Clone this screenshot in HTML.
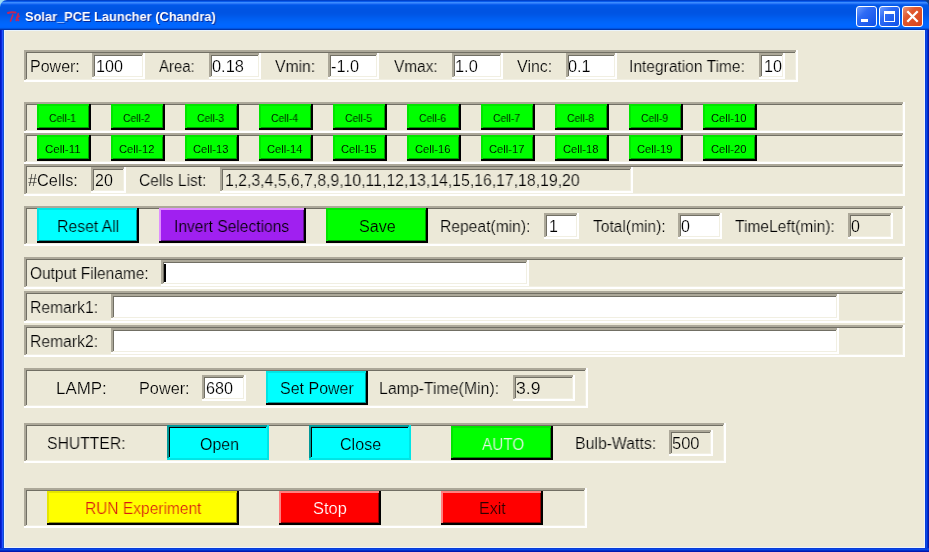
<!DOCTYPE html>
<html><head><meta charset="utf-8"><title>Solar_PCE Launcher (Chandra)</title><style>
html,body{margin:0;padding:0;width:929px;height:552px;overflow:hidden;background:#ECE9D8}
div{position:absolute;box-sizing:border-box}
.t{font-family:'Liberation Sans', sans-serif;line-height:20px;white-space:pre;transform-origin:0 0;will-change:transform}
</style></head><body>
<div style="left:0;top:0;width:8px;height:8px;background:#9EDCF4"></div>
<div style="left:921px;top:0;width:8px;height:8px;background:#10408C"></div>
<div style="left:0;top:0;width:929px;height:30px;border-radius:7px 7px 0 0;background:linear-gradient(180deg,#0041C9 0px,#0041C9 1px,#0A5BEC 1px,#0A5BEC 2px,#3A8CFF 2px,#3A8CFF 3px,#2A78F8 3px,#2A78F8 4px,#0E60F0 4px,#0E60F0 5px,#0058E8 5px,#0058E8 6px,#0057E6 6px,#0057E6 7px,#0056E5 7px,#0056E5 8px,#0055E4 8px,#0055E4 9px,#0054E3 9px,#0054E3 10px,#0054E3 10px,#0054E3 11px,#0054E3 11px,#0054E3 12px,#0054E3 12px,#0054E3 13px,#0055E4 13px,#0055E4 14px,#0056E6 14px,#0056E6 15px,#0058E8 15px,#0058E8 16px,#005AEB 16px,#005AEB 17px,#005CEE 17px,#005CEE 18px,#005EF1 18px,#005EF1 19px,#0060F3 19px,#0060F3 20px,#0062F5 20px,#0062F5 21px,#0064F8 21px,#0064F8 22px,#0065FA 22px,#0065FA 23px,#0066FC 23px,#0066FC 24px,#0066FF 24px,#0066FF 25px,#0066FF 25px,#0066FF 26px,#0066FF 26px,#0066FF 27px,#0064FA 27px,#0064FA 28px,#0054E0 28px,#0054E0 29px,#0038B0 29px,#0038B0 30px)"></div>
<div style="left:0px;top:30px;width:1px;height:522px;background:#0018C8"></div>
<div style="left:1px;top:30px;width:1px;height:522px;background:#0A28D8"></div>
<div style="left:2px;top:30px;width:1px;height:522px;background:#2050FF"></div>
<div style="left:3px;top:30px;width:1px;height:522px;background:#1050D0"></div>
<div style="left:925px;top:30px;width:1px;height:522px;background:#0A3CD8"></div>
<div style="left:926px;top:30px;width:1px;height:522px;background:#0848E8"></div>
<div style="left:927px;top:30px;width:1px;height:522px;background:#0030C8"></div>
<div style="left:928px;top:30px;width:1px;height:522px;background:#0018B0"></div>
<div style="left:0;top:548px;width:929px;height:1px;background:#0A3CD8"></div>
<div style="left:0;top:549px;width:929px;height:1px;background:#0848E8"></div>
<div style="left:0;top:550px;width:929px;height:1px;background:#0030C8"></div>
<div style="left:0;top:551px;width:929px;height:1px;background:#0018B0"></div>
<div style="left:4px;top:30px;width:921px;height:518px;background:#ECE9D8;border:1px solid #EAF4FC"></div>
<div style="left:0;top:0;width:30px;height:30px"><svg width="30" height="30"><g stroke="#D8204A" stroke-linecap="round" fill="none" opacity="0.9"><path d="M8 13 Q11 11.8 15.5 12.6" stroke-width="2"/><path d="M12.8 15 L10.6 21" stroke-width="1.7"/><path d="M18.3 13.5 L16.3 20.5" stroke-width="1.7"/><path d="M16.6 18 L19 16.2 M17 18.6 L18.4 20.4" stroke-width="1.8"/></g></svg></div>
<div style="left:856px;top:6px;width:21px;height:21px;border:1px solid #FFFFFF;border-radius:3px;background:linear-gradient(135deg,#6E9DFF 0%,#2E6BF5 35%,#1050E8 100%)"></div>
<div style="left:879px;top:6px;width:21px;height:21px;border:1px solid #FFFFFF;border-radius:3px;background:linear-gradient(135deg,#6E9DFF 0%,#2E6BF5 35%,#1050E8 100%)"></div>
<div style="left:902px;top:6px;width:21px;height:21px;border:1px solid #FFFFFF;border-radius:3px;background:linear-gradient(135deg,#E9967A 0%,#E0582E 35%,#D8431C 100%)"></div>
<div style="left:861px;top:19px;width:7px;height:3px;background:#fff"></div>
<div style="left:884px;top:11px;width:11px;height:11px;border:1px solid #fff;border-top-width:3px"></div>
<div style="left:905px;top:9px;width:15px;height:15px"><svg width="15" height="15"><path d="M2.3 2.3 L12.7 12.7 M12.7 2.3 L2.3 12.7" stroke="#fff" stroke-width="2.3"/></svg></div>
<div style="left:24px;top:50px;width:774px;height:32px;background:#FFFFFF"></div>
<div style="left:24px;top:50px;width:772px;height:30px;background:#ACA899"></div>
<div style="left:26px;top:52px;width:770px;height:28px;background:#F1EFE2"></div>
<div style="left:26px;top:52px;width:769px;height:27px;background:#716F64"></div>
<div style="left:27px;top:53px;width:768px;height:26px;background:#ECE9D8"></div>
<div style="left:92px;top:53px;width:53px;height:26px;background:#FFFFFF"></div>
<div style="left:92px;top:53px;width:51px;height:24px;background:#ACA899"></div>
<div style="left:94px;top:55px;width:49px;height:22px;background:#F1EFE2"></div>
<div style="left:94px;top:55px;width:48px;height:21px;background:#716F64"></div>
<div style="left:95px;top:56px;width:47px;height:20px;background:#FFFFFF"></div>
<div style="left:209px;top:53px;width:52px;height:26px;background:#FFFFFF"></div>
<div style="left:209px;top:53px;width:50px;height:24px;background:#ACA899"></div>
<div style="left:211px;top:55px;width:48px;height:22px;background:#F1EFE2"></div>
<div style="left:211px;top:55px;width:47px;height:21px;background:#716F64"></div>
<div style="left:212px;top:56px;width:46px;height:20px;background:#FFFFFF"></div>
<div style="left:328px;top:53px;width:51px;height:26px;background:#FFFFFF"></div>
<div style="left:328px;top:53px;width:49px;height:24px;background:#ACA899"></div>
<div style="left:330px;top:55px;width:47px;height:22px;background:#F1EFE2"></div>
<div style="left:330px;top:55px;width:46px;height:21px;background:#716F64"></div>
<div style="left:331px;top:56px;width:45px;height:20px;background:#FFFFFF"></div>
<div style="left:452px;top:53px;width:51px;height:26px;background:#FFFFFF"></div>
<div style="left:452px;top:53px;width:49px;height:24px;background:#ACA899"></div>
<div style="left:454px;top:55px;width:47px;height:22px;background:#F1EFE2"></div>
<div style="left:454px;top:55px;width:46px;height:21px;background:#716F64"></div>
<div style="left:455px;top:56px;width:45px;height:20px;background:#FFFFFF"></div>
<div style="left:566px;top:53px;width:51px;height:26px;background:#FFFFFF"></div>
<div style="left:566px;top:53px;width:49px;height:24px;background:#ACA899"></div>
<div style="left:568px;top:55px;width:47px;height:22px;background:#F1EFE2"></div>
<div style="left:568px;top:55px;width:46px;height:21px;background:#716F64"></div>
<div style="left:569px;top:56px;width:45px;height:20px;background:#FFFFFF"></div>
<div style="left:759px;top:53px;width:26px;height:26px;background:#FFFFFF"></div>
<div style="left:759px;top:53px;width:24px;height:24px;background:#ACA899"></div>
<div style="left:761px;top:55px;width:22px;height:22px;background:#F1EFE2"></div>
<div style="left:761px;top:55px;width:21px;height:21px;background:#716F64"></div>
<div style="left:762px;top:56px;width:20px;height:20px;background:#FFFFFF"></div>
<div style="left:24px;top:102px;width:881px;height:31px;background:#FFFFFF"></div>
<div style="left:24px;top:102px;width:879px;height:29px;background:#ACA899"></div>
<div style="left:26px;top:104px;width:877px;height:27px;background:#F1EFE2"></div>
<div style="left:26px;top:104px;width:876px;height:26px;background:#716F64"></div>
<div style="left:27px;top:105px;width:875px;height:25px;background:#ECE9D8"></div>
<div style="left:37px;top:104px;width:54px;height:26px;background:#000000"></div>
<div style="left:37px;top:104px;width:52px;height:24px;background:#00E500"></div>
<div style="left:39px;top:106px;width:50px;height:22px;background:#009900"></div>
<div style="left:39px;top:106px;width:49px;height:21px;background:#00FF00"></div>
<div style="left:40px;top:107px;width:48px;height:20px;background:#00FF00"></div>
<div style="left:111px;top:104px;width:54px;height:26px;background:#000000"></div>
<div style="left:111px;top:104px;width:52px;height:24px;background:#00E500"></div>
<div style="left:113px;top:106px;width:50px;height:22px;background:#009900"></div>
<div style="left:113px;top:106px;width:49px;height:21px;background:#00FF00"></div>
<div style="left:114px;top:107px;width:48px;height:20px;background:#00FF00"></div>
<div style="left:185px;top:104px;width:54px;height:26px;background:#000000"></div>
<div style="left:185px;top:104px;width:52px;height:24px;background:#00E500"></div>
<div style="left:187px;top:106px;width:50px;height:22px;background:#009900"></div>
<div style="left:187px;top:106px;width:49px;height:21px;background:#00FF00"></div>
<div style="left:188px;top:107px;width:48px;height:20px;background:#00FF00"></div>
<div style="left:259px;top:104px;width:54px;height:26px;background:#000000"></div>
<div style="left:259px;top:104px;width:52px;height:24px;background:#00E500"></div>
<div style="left:261px;top:106px;width:50px;height:22px;background:#009900"></div>
<div style="left:261px;top:106px;width:49px;height:21px;background:#00FF00"></div>
<div style="left:262px;top:107px;width:48px;height:20px;background:#00FF00"></div>
<div style="left:333px;top:104px;width:54px;height:26px;background:#000000"></div>
<div style="left:333px;top:104px;width:52px;height:24px;background:#00E500"></div>
<div style="left:335px;top:106px;width:50px;height:22px;background:#009900"></div>
<div style="left:335px;top:106px;width:49px;height:21px;background:#00FF00"></div>
<div style="left:336px;top:107px;width:48px;height:20px;background:#00FF00"></div>
<div style="left:407px;top:104px;width:54px;height:26px;background:#000000"></div>
<div style="left:407px;top:104px;width:52px;height:24px;background:#00E500"></div>
<div style="left:409px;top:106px;width:50px;height:22px;background:#009900"></div>
<div style="left:409px;top:106px;width:49px;height:21px;background:#00FF00"></div>
<div style="left:410px;top:107px;width:48px;height:20px;background:#00FF00"></div>
<div style="left:481px;top:104px;width:54px;height:26px;background:#000000"></div>
<div style="left:481px;top:104px;width:52px;height:24px;background:#00E500"></div>
<div style="left:483px;top:106px;width:50px;height:22px;background:#009900"></div>
<div style="left:483px;top:106px;width:49px;height:21px;background:#00FF00"></div>
<div style="left:484px;top:107px;width:48px;height:20px;background:#00FF00"></div>
<div style="left:555px;top:104px;width:54px;height:26px;background:#000000"></div>
<div style="left:555px;top:104px;width:52px;height:24px;background:#00E500"></div>
<div style="left:557px;top:106px;width:50px;height:22px;background:#009900"></div>
<div style="left:557px;top:106px;width:49px;height:21px;background:#00FF00"></div>
<div style="left:558px;top:107px;width:48px;height:20px;background:#00FF00"></div>
<div style="left:629px;top:104px;width:54px;height:26px;background:#000000"></div>
<div style="left:629px;top:104px;width:52px;height:24px;background:#00E500"></div>
<div style="left:631px;top:106px;width:50px;height:22px;background:#009900"></div>
<div style="left:631px;top:106px;width:49px;height:21px;background:#00FF00"></div>
<div style="left:632px;top:107px;width:48px;height:20px;background:#00FF00"></div>
<div style="left:703px;top:104px;width:54px;height:26px;background:#000000"></div>
<div style="left:703px;top:104px;width:52px;height:24px;background:#00E500"></div>
<div style="left:705px;top:106px;width:50px;height:22px;background:#009900"></div>
<div style="left:705px;top:106px;width:49px;height:21px;background:#00FF00"></div>
<div style="left:706px;top:107px;width:48px;height:20px;background:#00FF00"></div>
<div style="left:24px;top:133px;width:881px;height:31px;background:#FFFFFF"></div>
<div style="left:24px;top:133px;width:879px;height:29px;background:#ACA899"></div>
<div style="left:26px;top:135px;width:877px;height:27px;background:#F1EFE2"></div>
<div style="left:26px;top:135px;width:876px;height:26px;background:#716F64"></div>
<div style="left:27px;top:136px;width:875px;height:25px;background:#ECE9D8"></div>
<div style="left:37px;top:135px;width:54px;height:26px;background:#000000"></div>
<div style="left:37px;top:135px;width:52px;height:24px;background:#00E500"></div>
<div style="left:39px;top:137px;width:50px;height:22px;background:#009900"></div>
<div style="left:39px;top:137px;width:49px;height:21px;background:#00FF00"></div>
<div style="left:40px;top:138px;width:48px;height:20px;background:#00FF00"></div>
<div style="left:111px;top:135px;width:54px;height:26px;background:#000000"></div>
<div style="left:111px;top:135px;width:52px;height:24px;background:#00E500"></div>
<div style="left:113px;top:137px;width:50px;height:22px;background:#009900"></div>
<div style="left:113px;top:137px;width:49px;height:21px;background:#00FF00"></div>
<div style="left:114px;top:138px;width:48px;height:20px;background:#00FF00"></div>
<div style="left:185px;top:135px;width:54px;height:26px;background:#000000"></div>
<div style="left:185px;top:135px;width:52px;height:24px;background:#00E500"></div>
<div style="left:187px;top:137px;width:50px;height:22px;background:#009900"></div>
<div style="left:187px;top:137px;width:49px;height:21px;background:#00FF00"></div>
<div style="left:188px;top:138px;width:48px;height:20px;background:#00FF00"></div>
<div style="left:259px;top:135px;width:54px;height:26px;background:#000000"></div>
<div style="left:259px;top:135px;width:52px;height:24px;background:#00E500"></div>
<div style="left:261px;top:137px;width:50px;height:22px;background:#009900"></div>
<div style="left:261px;top:137px;width:49px;height:21px;background:#00FF00"></div>
<div style="left:262px;top:138px;width:48px;height:20px;background:#00FF00"></div>
<div style="left:333px;top:135px;width:54px;height:26px;background:#000000"></div>
<div style="left:333px;top:135px;width:52px;height:24px;background:#00E500"></div>
<div style="left:335px;top:137px;width:50px;height:22px;background:#009900"></div>
<div style="left:335px;top:137px;width:49px;height:21px;background:#00FF00"></div>
<div style="left:336px;top:138px;width:48px;height:20px;background:#00FF00"></div>
<div style="left:407px;top:135px;width:54px;height:26px;background:#000000"></div>
<div style="left:407px;top:135px;width:52px;height:24px;background:#00E500"></div>
<div style="left:409px;top:137px;width:50px;height:22px;background:#009900"></div>
<div style="left:409px;top:137px;width:49px;height:21px;background:#00FF00"></div>
<div style="left:410px;top:138px;width:48px;height:20px;background:#00FF00"></div>
<div style="left:481px;top:135px;width:54px;height:26px;background:#000000"></div>
<div style="left:481px;top:135px;width:52px;height:24px;background:#00E500"></div>
<div style="left:483px;top:137px;width:50px;height:22px;background:#009900"></div>
<div style="left:483px;top:137px;width:49px;height:21px;background:#00FF00"></div>
<div style="left:484px;top:138px;width:48px;height:20px;background:#00FF00"></div>
<div style="left:555px;top:135px;width:54px;height:26px;background:#000000"></div>
<div style="left:555px;top:135px;width:52px;height:24px;background:#00E500"></div>
<div style="left:557px;top:137px;width:50px;height:22px;background:#009900"></div>
<div style="left:557px;top:137px;width:49px;height:21px;background:#00FF00"></div>
<div style="left:558px;top:138px;width:48px;height:20px;background:#00FF00"></div>
<div style="left:629px;top:135px;width:54px;height:26px;background:#000000"></div>
<div style="left:629px;top:135px;width:52px;height:24px;background:#00E500"></div>
<div style="left:631px;top:137px;width:50px;height:22px;background:#009900"></div>
<div style="left:631px;top:137px;width:49px;height:21px;background:#00FF00"></div>
<div style="left:632px;top:138px;width:48px;height:20px;background:#00FF00"></div>
<div style="left:703px;top:135px;width:54px;height:26px;background:#000000"></div>
<div style="left:703px;top:135px;width:52px;height:24px;background:#00E500"></div>
<div style="left:705px;top:137px;width:50px;height:22px;background:#009900"></div>
<div style="left:705px;top:137px;width:49px;height:21px;background:#00FF00"></div>
<div style="left:706px;top:138px;width:48px;height:20px;background:#00FF00"></div>
<div style="left:24px;top:164px;width:881px;height:32px;background:#FFFFFF"></div>
<div style="left:24px;top:164px;width:879px;height:30px;background:#ACA899"></div>
<div style="left:26px;top:166px;width:877px;height:28px;background:#F1EFE2"></div>
<div style="left:26px;top:166px;width:876px;height:27px;background:#716F64"></div>
<div style="left:27px;top:167px;width:875px;height:26px;background:#ECE9D8"></div>
<div style="left:91px;top:167px;width:35px;height:26px;background:#FFFFFF"></div>
<div style="left:91px;top:167px;width:33px;height:24px;background:#ACA899"></div>
<div style="left:93px;top:169px;width:31px;height:22px;background:#F1EFE2"></div>
<div style="left:93px;top:169px;width:30px;height:21px;background:#716F64"></div>
<div style="left:94px;top:170px;width:29px;height:20px;background:#ECE9D8"></div>
<div style="left:220px;top:167px;width:413px;height:26px;background:#FFFFFF"></div>
<div style="left:220px;top:167px;width:411px;height:24px;background:#ACA899"></div>
<div style="left:222px;top:169px;width:409px;height:22px;background:#F1EFE2"></div>
<div style="left:222px;top:169px;width:408px;height:21px;background:#716F64"></div>
<div style="left:223px;top:170px;width:407px;height:20px;background:#ECE9D8"></div>
<div style="left:24px;top:206px;width:881px;height:40px;background:#FFFFFF"></div>
<div style="left:24px;top:206px;width:879px;height:38px;background:#ACA899"></div>
<div style="left:26px;top:208px;width:877px;height:36px;background:#F1EFE2"></div>
<div style="left:26px;top:208px;width:876px;height:35px;background:#716F64"></div>
<div style="left:27px;top:209px;width:875px;height:34px;background:#ECE9D8"></div>
<div style="left:37px;top:208px;width:102px;height:35px;background:#000000"></div>
<div style="left:37px;top:208px;width:100px;height:33px;background:#00E5E5"></div>
<div style="left:39px;top:210px;width:98px;height:31px;background:#009999"></div>
<div style="left:39px;top:210px;width:97px;height:30px;background:#00FFFF"></div>
<div style="left:40px;top:211px;width:96px;height:29px;background:#00FFFF"></div>
<div style="left:159px;top:208px;width:147px;height:35px;background:#000000"></div>
<div style="left:159px;top:208px;width:145px;height:33px;background:#E08FFF"></div>
<div style="left:161px;top:210px;width:143px;height:31px;background:#601390"></div>
<div style="left:161px;top:210px;width:142px;height:30px;background:#A020F0"></div>
<div style="left:162px;top:211px;width:141px;height:29px;background:#A020F0"></div>
<div style="left:326px;top:208px;width:102px;height:35px;background:#000000"></div>
<div style="left:326px;top:208px;width:100px;height:33px;background:#00E500"></div>
<div style="left:328px;top:210px;width:98px;height:31px;background:#009900"></div>
<div style="left:328px;top:210px;width:97px;height:30px;background:#00FF00"></div>
<div style="left:329px;top:211px;width:96px;height:29px;background:#00FF00"></div>
<div style="left:544px;top:213px;width:35px;height:26px;background:#FFFFFF"></div>
<div style="left:544px;top:213px;width:33px;height:24px;background:#ACA899"></div>
<div style="left:546px;top:215px;width:31px;height:22px;background:#F1EFE2"></div>
<div style="left:546px;top:215px;width:30px;height:21px;background:#716F64"></div>
<div style="left:547px;top:216px;width:29px;height:20px;background:#FFFFFF"></div>
<div style="left:678px;top:213px;width:44px;height:26px;background:#FFFFFF"></div>
<div style="left:678px;top:213px;width:42px;height:24px;background:#ACA899"></div>
<div style="left:680px;top:215px;width:40px;height:22px;background:#F1EFE2"></div>
<div style="left:680px;top:215px;width:39px;height:21px;background:#716F64"></div>
<div style="left:681px;top:216px;width:38px;height:20px;background:#FFFFFF"></div>
<div style="left:848px;top:213px;width:45px;height:26px;background:#FFFFFF"></div>
<div style="left:848px;top:213px;width:43px;height:24px;background:#ACA899"></div>
<div style="left:850px;top:215px;width:41px;height:22px;background:#F1EFE2"></div>
<div style="left:850px;top:215px;width:40px;height:21px;background:#716F64"></div>
<div style="left:851px;top:216px;width:39px;height:20px;background:#ECE9D8"></div>
<div style="left:24px;top:257px;width:881px;height:32px;background:#FFFFFF"></div>
<div style="left:24px;top:257px;width:879px;height:30px;background:#ACA899"></div>
<div style="left:26px;top:259px;width:877px;height:28px;background:#F1EFE2"></div>
<div style="left:26px;top:259px;width:876px;height:27px;background:#716F64"></div>
<div style="left:27px;top:260px;width:875px;height:26px;background:#ECE9D8"></div>
<div style="left:161px;top:260px;width:368px;height:26px;background:#FFFFFF"></div>
<div style="left:161px;top:260px;width:366px;height:24px;background:#ACA899"></div>
<div style="left:163px;top:262px;width:364px;height:22px;background:#F1EFE2"></div>
<div style="left:163px;top:262px;width:363px;height:21px;background:#716F64"></div>
<div style="left:164px;top:263px;width:362px;height:20px;background:#FFFFFF"></div>
<div style="left:164px;top:264px;width:2px;height:18px;background:#000"></div>
<div style="left:24px;top:291px;width:881px;height:32px;background:#FFFFFF"></div>
<div style="left:24px;top:291px;width:879px;height:30px;background:#ACA899"></div>
<div style="left:26px;top:293px;width:877px;height:28px;background:#F1EFE2"></div>
<div style="left:26px;top:293px;width:876px;height:27px;background:#716F64"></div>
<div style="left:27px;top:294px;width:875px;height:26px;background:#ECE9D8"></div>
<div style="left:111px;top:294px;width:728px;height:26px;background:#FFFFFF"></div>
<div style="left:111px;top:294px;width:726px;height:24px;background:#ACA899"></div>
<div style="left:113px;top:296px;width:724px;height:22px;background:#F1EFE2"></div>
<div style="left:113px;top:296px;width:723px;height:21px;background:#716F64"></div>
<div style="left:114px;top:297px;width:722px;height:20px;background:#FFFFFF"></div>
<div style="left:24px;top:325px;width:881px;height:32px;background:#FFFFFF"></div>
<div style="left:24px;top:325px;width:879px;height:30px;background:#ACA899"></div>
<div style="left:26px;top:327px;width:877px;height:28px;background:#F1EFE2"></div>
<div style="left:26px;top:327px;width:876px;height:27px;background:#716F64"></div>
<div style="left:27px;top:328px;width:875px;height:26px;background:#ECE9D8"></div>
<div style="left:111px;top:328px;width:728px;height:26px;background:#FFFFFF"></div>
<div style="left:111px;top:328px;width:726px;height:24px;background:#ACA899"></div>
<div style="left:113px;top:330px;width:724px;height:22px;background:#F1EFE2"></div>
<div style="left:113px;top:330px;width:723px;height:21px;background:#716F64"></div>
<div style="left:114px;top:331px;width:722px;height:20px;background:#FFFFFF"></div>
<div style="left:24px;top:368px;width:564px;height:40px;background:#FFFFFF"></div>
<div style="left:24px;top:368px;width:562px;height:38px;background:#ACA899"></div>
<div style="left:26px;top:370px;width:560px;height:36px;background:#F1EFE2"></div>
<div style="left:26px;top:370px;width:559px;height:35px;background:#716F64"></div>
<div style="left:27px;top:371px;width:558px;height:34px;background:#ECE9D8"></div>
<div style="left:202px;top:375px;width:44px;height:26px;background:#FFFFFF"></div>
<div style="left:202px;top:375px;width:42px;height:24px;background:#ACA899"></div>
<div style="left:204px;top:377px;width:40px;height:22px;background:#F1EFE2"></div>
<div style="left:204px;top:377px;width:39px;height:21px;background:#716F64"></div>
<div style="left:205px;top:378px;width:38px;height:20px;background:#FFFFFF"></div>
<div style="left:266px;top:371px;width:102px;height:34px;background:#000000"></div>
<div style="left:266px;top:371px;width:100px;height:32px;background:#00E5E5"></div>
<div style="left:268px;top:373px;width:98px;height:30px;background:#009999"></div>
<div style="left:268px;top:373px;width:97px;height:29px;background:#00FFFF"></div>
<div style="left:269px;top:374px;width:96px;height:28px;background:#00FFFF"></div>
<div style="left:513px;top:375px;width:62px;height:26px;background:#FFFFFF"></div>
<div style="left:513px;top:375px;width:60px;height:24px;background:#ACA899"></div>
<div style="left:515px;top:377px;width:58px;height:22px;background:#F1EFE2"></div>
<div style="left:515px;top:377px;width:57px;height:21px;background:#716F64"></div>
<div style="left:516px;top:378px;width:56px;height:20px;background:#ECE9D8"></div>
<div style="left:24px;top:423px;width:702px;height:40px;background:#FFFFFF"></div>
<div style="left:24px;top:423px;width:700px;height:38px;background:#ACA899"></div>
<div style="left:26px;top:425px;width:698px;height:36px;background:#F1EFE2"></div>
<div style="left:26px;top:425px;width:697px;height:35px;background:#716F64"></div>
<div style="left:27px;top:426px;width:696px;height:34px;background:#ECE9D8"></div>
<div style="left:167px;top:425px;width:102px;height:35px;background:#00E5E5"></div>
<div style="left:167px;top:425px;width:100px;height:33px;background:#009999"></div>
<div style="left:169px;top:427px;width:98px;height:31px;background:#00FFFF"></div>
<div style="left:169px;top:427px;width:97px;height:30px;background:#000000"></div>
<div style="left:170px;top:428px;width:96px;height:29px;background:#00FFFF"></div>
<div style="left:309px;top:425px;width:102px;height:35px;background:#00E5E5"></div>
<div style="left:309px;top:425px;width:100px;height:33px;background:#009999"></div>
<div style="left:311px;top:427px;width:98px;height:31px;background:#00FFFF"></div>
<div style="left:311px;top:427px;width:97px;height:30px;background:#000000"></div>
<div style="left:312px;top:428px;width:96px;height:29px;background:#00FFFF"></div>
<div style="left:451px;top:426px;width:102px;height:34px;background:#000000"></div>
<div style="left:451px;top:426px;width:100px;height:32px;background:#00E500"></div>
<div style="left:453px;top:428px;width:98px;height:30px;background:#009900"></div>
<div style="left:453px;top:428px;width:97px;height:29px;background:#00FF00"></div>
<div style="left:454px;top:429px;width:96px;height:28px;background:#00FF00"></div>
<div style="left:669px;top:430px;width:44px;height:26px;background:#FFFFFF"></div>
<div style="left:669px;top:430px;width:42px;height:24px;background:#ACA899"></div>
<div style="left:671px;top:432px;width:40px;height:22px;background:#F1EFE2"></div>
<div style="left:671px;top:432px;width:39px;height:21px;background:#716F64"></div>
<div style="left:672px;top:433px;width:38px;height:20px;background:#ECE9D8"></div>
<div style="left:24px;top:488px;width:563px;height:40px;background:#FFFFFF"></div>
<div style="left:24px;top:488px;width:561px;height:38px;background:#ACA899"></div>
<div style="left:26px;top:490px;width:559px;height:36px;background:#F1EFE2"></div>
<div style="left:26px;top:490px;width:558px;height:35px;background:#716F64"></div>
<div style="left:27px;top:491px;width:557px;height:34px;background:#ECE9D8"></div>
<div style="left:47px;top:491px;width:192px;height:34px;background:#000000"></div>
<div style="left:47px;top:491px;width:190px;height:32px;background:#E5E500"></div>
<div style="left:49px;top:493px;width:188px;height:30px;background:#999900"></div>
<div style="left:49px;top:493px;width:187px;height:29px;background:#FFFF00"></div>
<div style="left:50px;top:494px;width:186px;height:28px;background:#FFFF00"></div>
<div style="left:279px;top:491px;width:102px;height:34px;background:#000000"></div>
<div style="left:279px;top:491px;width:100px;height:32px;background:#FF7F7F"></div>
<div style="left:281px;top:493px;width:98px;height:30px;background:#990000"></div>
<div style="left:281px;top:493px;width:97px;height:29px;background:#FF0000"></div>
<div style="left:282px;top:494px;width:96px;height:28px;background:#FF0000"></div>
<div style="left:441px;top:491px;width:102px;height:34px;background:#000000"></div>
<div style="left:441px;top:491px;width:100px;height:32px;background:#FF7F7F"></div>
<div style="left:443px;top:493px;width:98px;height:30px;background:#990000"></div>
<div style="left:443px;top:493px;width:97px;height:29px;background:#FF0000"></div>
<div style="left:444px;top:494px;width:96px;height:28px;background:#FF0000"></div>
<div class="t" style="left:24.81px;top:7px;font-size:13px;color:#FFFFFF;font-weight:bold;transform:scaleX(0.9854);text-shadow:1px 1px 0 #0A2A9A">Solar_PCE Launcher (Chandra)</div>
<div class="t" style="left:29.50px;top:57px;font-size:16px;color:#000000;font-weight:normal;transform:scaleX(0.9979);-webkit-text-stroke:0.2px #ECE9D8">Power:</div>
<div class="t" style="left:96.19px;top:57px;font-size:16px;color:#000000;font-weight:normal;transform:scaleX(1.0080);-webkit-text-stroke:0.2px #FFFFFF">100</div>
<div class="t" style="left:159.20px;top:57px;font-size:16px;color:#000000;font-weight:normal;transform:scaleX(0.9324);-webkit-text-stroke:0.2px #ECE9D8">Area:</div>
<div class="t" style="left:212.48px;top:57px;font-size:16px;color:#000000;font-weight:normal;transform:scaleX(1.0241);-webkit-text-stroke:0.2px #FFFFFF">0.18</div>
<div class="t" style="left:275.12px;top:57px;font-size:16px;color:#000000;font-weight:normal;transform:scaleX(0.9816);-webkit-text-stroke:0.2px #ECE9D8">Vmin:</div>
<div class="t" style="left:331.08px;top:57px;font-size:16px;color:#000000;font-weight:normal;transform:scaleX(1.0192);-webkit-text-stroke:0.2px #FFFFFF">-1.0</div>
<div class="t" style="left:394.24px;top:57px;font-size:16px;color:#000000;font-weight:normal;transform:scaleX(0.9605);-webkit-text-stroke:0.2px #ECE9D8">Vmax:</div>
<div class="t" style="left:455.08px;top:57px;font-size:16px;color:#000000;font-weight:normal;transform:scaleX(1.0250);-webkit-text-stroke:0.2px #FFFFFF">1.0</div>
<div class="t" style="left:516.90px;top:57px;font-size:16px;color:#000000;font-weight:normal;transform:scaleX(1.0000);-webkit-text-stroke:0.2px #ECE9D8">Vinc:</div>
<div class="t" style="left:568.18px;top:57px;font-size:16px;color:#000000;font-weight:normal;transform:scaleX(1.0200);-webkit-text-stroke:0.2px #FFFFFF">0.1</div>
<div class="t" style="left:629.26px;top:57px;font-size:16px;color:#000000;font-weight:normal;transform:scaleX(0.9724);-webkit-text-stroke:0.2px #ECE9D8">Integration Time:</div>
<div class="t" style="left:763.59px;top:57px;font-size:16px;color:#000000;font-weight:normal;transform:scaleX(1.0125);-webkit-text-stroke:0.2px #FFFFFF">10</div>
<div class="t" style="left:49.31px;top:108px;font-size:11px;color:#000000;font-weight:normal;transform:scaleX(0.9444);-webkit-text-stroke:0.1px #00FF00">Cell-1</div>
<div class="t" style="left:123.31px;top:108px;font-size:11px;color:#000000;font-weight:normal;transform:scaleX(0.9444);-webkit-text-stroke:0.1px #00FF00">Cell-2</div>
<div class="t" style="left:197.31px;top:108px;font-size:11px;color:#000000;font-weight:normal;transform:scaleX(0.9444);-webkit-text-stroke:0.1px #00FF00">Cell-3</div>
<div class="t" style="left:271.31px;top:108px;font-size:11px;color:#000000;font-weight:normal;transform:scaleX(0.9444);-webkit-text-stroke:0.1px #00FF00">Cell-4</div>
<div class="t" style="left:345.31px;top:108px;font-size:11px;color:#000000;font-weight:normal;transform:scaleX(0.9444);-webkit-text-stroke:0.1px #00FF00">Cell-5</div>
<div class="t" style="left:419.31px;top:108px;font-size:11px;color:#000000;font-weight:normal;transform:scaleX(0.9444);-webkit-text-stroke:0.1px #00FF00">Cell-6</div>
<div class="t" style="left:493.31px;top:108px;font-size:11px;color:#000000;font-weight:normal;transform:scaleX(0.9444);-webkit-text-stroke:0.1px #00FF00">Cell-7</div>
<div class="t" style="left:567.31px;top:108px;font-size:11px;color:#000000;font-weight:normal;transform:scaleX(0.9444);-webkit-text-stroke:0.1px #00FF00">Cell-8</div>
<div class="t" style="left:641.31px;top:108px;font-size:11px;color:#000000;font-weight:normal;transform:scaleX(0.9444);-webkit-text-stroke:0.1px #00FF00">Cell-9</div>
<div class="t" style="left:711.23px;top:108px;font-size:11px;color:#000000;font-weight:normal;transform:scaleX(1.0152);-webkit-text-stroke:0.1px #00FF00">Cell-10</div>
<div class="t" style="left:45.20px;top:139px;font-size:11px;color:#000000;font-weight:normal;transform:scaleX(1.0469);-webkit-text-stroke:0.1px #00FF00">Cell-11</div>
<div class="t" style="left:119.23px;top:139px;font-size:11px;color:#000000;font-weight:normal;transform:scaleX(1.0152);-webkit-text-stroke:0.1px #00FF00">Cell-12</div>
<div class="t" style="left:193.23px;top:139px;font-size:11px;color:#000000;font-weight:normal;transform:scaleX(1.0152);-webkit-text-stroke:0.1px #00FF00">Cell-13</div>
<div class="t" style="left:267.23px;top:139px;font-size:11px;color:#000000;font-weight:normal;transform:scaleX(1.0152);-webkit-text-stroke:0.1px #00FF00">Cell-14</div>
<div class="t" style="left:341.23px;top:139px;font-size:11px;color:#000000;font-weight:normal;transform:scaleX(1.0152);-webkit-text-stroke:0.1px #00FF00">Cell-15</div>
<div class="t" style="left:415.23px;top:139px;font-size:11px;color:#000000;font-weight:normal;transform:scaleX(1.0152);-webkit-text-stroke:0.1px #00FF00">Cell-16</div>
<div class="t" style="left:489.23px;top:139px;font-size:11px;color:#000000;font-weight:normal;transform:scaleX(1.0152);-webkit-text-stroke:0.1px #00FF00">Cell-17</div>
<div class="t" style="left:563.23px;top:139px;font-size:11px;color:#000000;font-weight:normal;transform:scaleX(1.0152);-webkit-text-stroke:0.1px #00FF00">Cell-18</div>
<div class="t" style="left:637.23px;top:139px;font-size:11px;color:#000000;font-weight:normal;transform:scaleX(1.0152);-webkit-text-stroke:0.1px #00FF00">Cell-19</div>
<div class="t" style="left:711.23px;top:139px;font-size:11px;color:#000000;font-weight:normal;transform:scaleX(1.0152);-webkit-text-stroke:0.1px #00FF00">Cell-20</div>
<div class="t" style="left:28.48px;top:171px;font-size:16px;color:#000000;font-weight:normal;transform:scaleX(1.0196);-webkit-text-stroke:0.2px #ECE9D8">#Cells:</div>
<div class="t" style="left:94.80px;top:171px;font-size:16px;color:#000000;font-weight:normal;transform:scaleX(1.0000);-webkit-text-stroke:0.2px #ECE9D8">20</div>
<div class="t" style="left:138.63px;top:171px;font-size:16px;color:#000000;font-weight:normal;transform:scaleX(0.9716);-webkit-text-stroke:0.2px #ECE9D8">Cells List:</div>
<div class="t" style="left:224.81px;top:171px;font-size:16px;color:#000000;font-weight:normal;transform:scaleX(0.9874);-webkit-text-stroke:0.2px #ECE9D8">1,2,3,4,5,6,7,8,9,10,11,12,13,14,15,16,17,18,19,20</div>
<div class="t" style="left:56.81px;top:217px;font-size:16px;color:#000000;font-weight:normal;transform:scaleX(0.9869);-webkit-text-stroke:0.2px #00FFFF">Reset All</div>
<div class="t" style="left:174.35px;top:217px;font-size:16px;color:#000000;font-weight:normal;transform:scaleX(0.9730);-webkit-text-stroke:0.2px #A020F0">Invert Selections</div>
<div class="t" style="left:358.99px;top:217px;font-size:16px;color:#000000;font-weight:normal;transform:scaleX(1.0088);-webkit-text-stroke:0.2px #00FF00">Save</div>
<div class="t" style="left:440.02px;top:217px;font-size:16px;color:#000000;font-weight:normal;transform:scaleX(0.9778);-webkit-text-stroke:0.2px #ECE9D8">Repeat(min):</div>
<div class="t" style="left:548.90px;top:217px;font-size:16px;color:#000000;font-weight:normal;transform:scaleX(1.0000);-webkit-text-stroke:0.2px #FFFFFF">1</div>
<div class="t" style="left:592.63px;top:217px;font-size:16px;color:#000000;font-weight:normal;transform:scaleX(0.9722);-webkit-text-stroke:0.2px #ECE9D8">Total(min):</div>
<div class="t" style="left:681.30px;top:217px;font-size:16px;color:#000000;font-weight:normal;transform:scaleX(1.0000);-webkit-text-stroke:0.2px #FFFFFF">0</div>
<div class="t" style="left:734.73px;top:217px;font-size:16px;color:#000000;font-weight:normal;transform:scaleX(0.9740);-webkit-text-stroke:0.2px #ECE9D8">TimeLeft(min):</div>
<div class="t" style="left:851.30px;top:217px;font-size:16px;color:#000000;font-weight:normal;transform:scaleX(1.0000);-webkit-text-stroke:0.2px #ECE9D8">0</div>
<div class="t" style="left:29.73px;top:264px;font-size:16px;color:#000000;font-weight:normal;transform:scaleX(0.9667);-webkit-text-stroke:0.2px #ECE9D8">Output Filename:</div>
<div class="t" style="left:29.52px;top:298px;font-size:16px;color:#000000;font-weight:normal;transform:scaleX(0.9806);-webkit-text-stroke:0.2px #ECE9D8">Remark1:</div>
<div class="t" style="left:29.52px;top:332px;font-size:16px;color:#000000;font-weight:normal;transform:scaleX(0.9806);-webkit-text-stroke:0.2px #ECE9D8">Remark2:</div>
<div class="t" style="left:55.99px;top:379px;font-size:16px;color:#000000;font-weight:normal;transform:scaleX(1.0568);-webkit-text-stroke:0.2px #ECE9D8">LAMP:</div>
<div class="t" style="left:139.08px;top:379px;font-size:16px;color:#000000;font-weight:normal;transform:scaleX(1.0170);-webkit-text-stroke:0.2px #ECE9D8">Power:</div>
<div class="t" style="left:205.69px;top:379px;font-size:16px;color:#000000;font-weight:normal;transform:scaleX(1.0120);-webkit-text-stroke:0.2px #FFFFFF">680</div>
<div class="t" style="left:279.90px;top:379px;font-size:16px;color:#000000;font-weight:normal;transform:scaleX(0.9986);-webkit-text-stroke:0.2px #00FFFF">Set Power</div>
<div class="t" style="left:378.72px;top:379px;font-size:16px;color:#000000;font-weight:normal;transform:scaleX(0.9907);-webkit-text-stroke:0.2px #ECE9D8">Lamp-Time(Min):</div>
<div class="t" style="left:515.90px;top:379px;font-size:16px;color:#000000;font-weight:normal;transform:scaleX(1.1000);-webkit-text-stroke:0.2px #ECE9D8">3.9</div>
<div class="t" style="left:47.42px;top:434px;font-size:16px;color:#000000;font-weight:normal;transform:scaleX(0.9818);-webkit-text-stroke:0.2px #ECE9D8">SHUTTER:</div>
<div class="t" style="left:199.71px;top:435px;font-size:16px;color:#000000;font-weight:normal;transform:scaleX(0.9946);-webkit-text-stroke:0.2px #00FFFF">Open</div>
<div class="t" style="left:339.89px;top:435px;font-size:16px;color:#000000;font-weight:normal;transform:scaleX(1.0051);-webkit-text-stroke:0.2px #00FFFF">Close</div>
<div class="t" style="left:482.10px;top:435px;font-size:16px;color:#E8F4E8;font-weight:normal;transform:scaleX(0.9558);-webkit-text-stroke:0.2px #00FF00">AUTO</div>
<div class="t" style="left:575.21px;top:434px;font-size:16px;color:#000000;font-weight:normal;transform:scaleX(0.9887);-webkit-text-stroke:0.2px #ECE9D8">Bulb-Watts:</div>
<div class="t" style="left:672.37px;top:434px;font-size:16px;color:#000000;font-weight:normal;transform:scaleX(1.0320);-webkit-text-stroke:0.2px #ECE9D8">500</div>
<div class="t" style="left:84.63px;top:499px;font-size:16px;color:#D81C10;font-weight:normal;transform:scaleX(0.9697);-webkit-text-stroke:0.2px #FFFF00">RUN Experiment</div>
<div class="t" style="left:313.17px;top:499px;font-size:16px;color:#FFFFFF;font-weight:normal;transform:scaleX(1.0258);-webkit-text-stroke:0.2px #FF0000">Stop</div>
<div class="t" style="left:478.70px;top:499px;font-size:16px;color:#300000;font-weight:normal;transform:scaleX(0.9960);-webkit-text-stroke:0.2px #FF0000">Exit</div>
</body></html>
